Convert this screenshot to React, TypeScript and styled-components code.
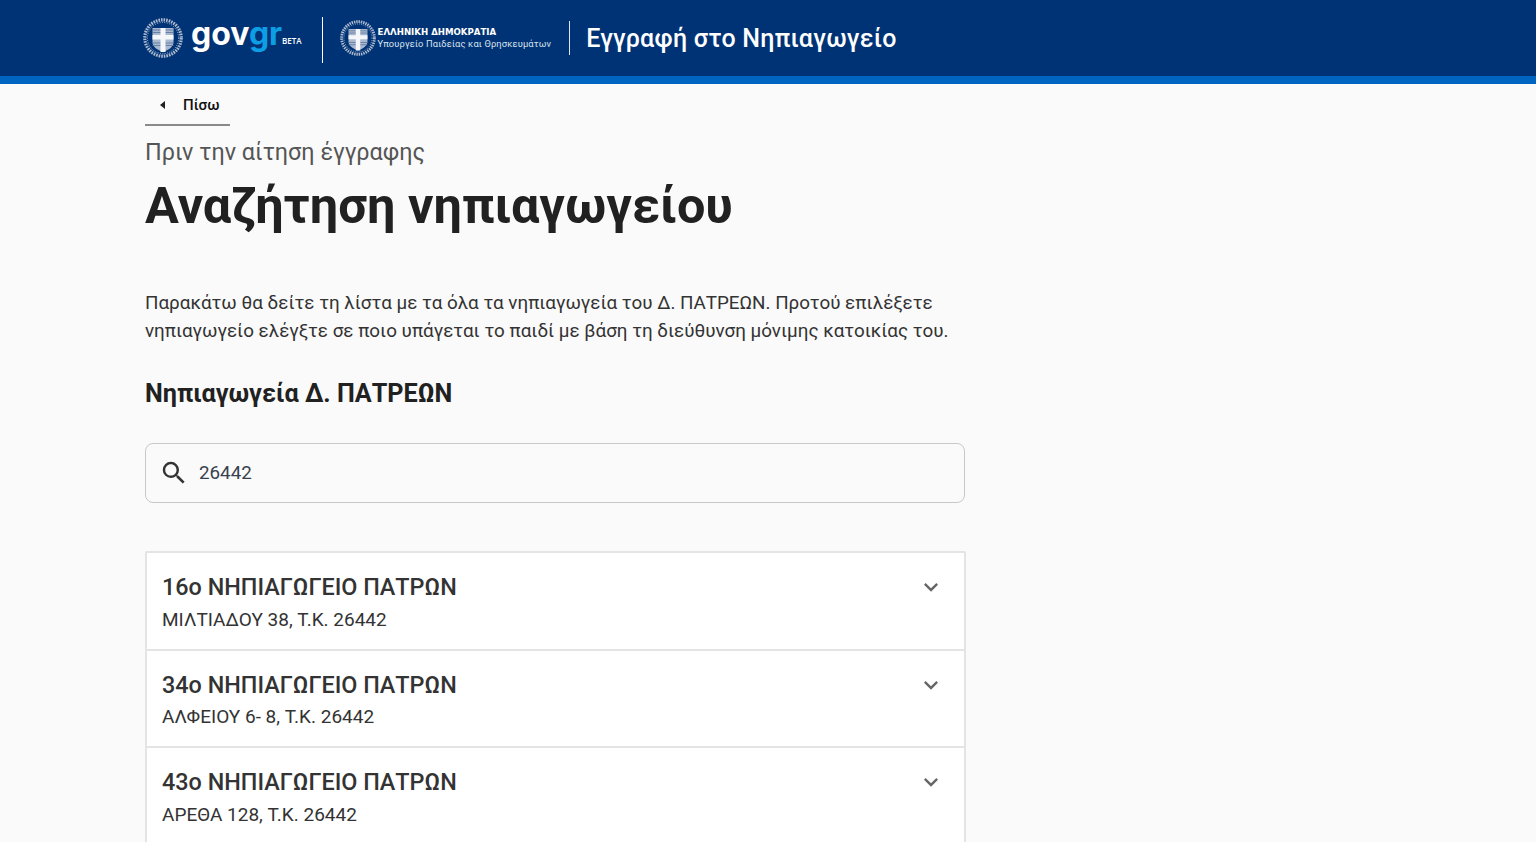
import { createGlobalStyle } from "styled-components";
import styled from "styled-components";

const GlobalStyle = createGlobalStyle`
  html, body {
    margin: 0;
    padding: 0;
    height: 842px;
    overflow: hidden;
    background: #fafafa;
    font-family: Roboto, "Noto Sans", sans-serif;
    color: #212121;
  }
`;

const schools = [
  { name: "16ο ΝΗΠΙΑΓΩΓΕΙΟ ΠΑΤΡΩΝ", address: "ΜΙΛΤΙΑΔΟΥ 38, Τ.Κ. 26442" },
  { name: "34ο ΝΗΠΙΑΓΩΓΕΙΟ ΠΑΤΡΩΝ", address: "ΑΛΦΕΙΟΥ 6- 8, Τ.Κ. 26442" },
  { name: "43ο ΝΗΠΙΑΓΩΓΕΙΟ ΠΑΤΡΩΝ", address: "ΑΡΕΘΑ 128, Τ.Κ. 26442" },
];

const Emblem = ({ size }: { size: number }) => (
  <svg width={size} height={size} viewBox="0 0 40 40" fill="none">
    <circle cx="20" cy="20" r="18.2" stroke="#aebbd0" strokeWidth="3.2" strokeDasharray="1.6 1" />
    <circle cx="20" cy="20" r="15.6" stroke="#d5dce8" strokeWidth="0.8" strokeDasharray="1 1.4" />
    <path d="M9.5 10h21v14c0 5-5 8-10.500 10-5.500-2-10.500-5-10.500-10z" fill="#aab8cf" />
    <path d="M9.500 12h21M9.500 14.500h21M9.500 25h21M9.500 27.500h21" stroke="#5f789f" strokeWidth="0.9" />
    <path d="M17.500 10h5V17h8v4.500h-8V34h-5V21.500h-8V17h8z" fill="#f4f6fa" />
  </svg>
);

export default function App() {
  return (
    <>
      <GlobalStyle />
      <Header>
        <HeaderInner>
          <GovLogo>
            <Emblem size={40} />
            <GovWord>
              gov<GovAccent>gr</GovAccent>
            </GovWord>
            <Beta>BETA</Beta>
          </GovLogo>
          <TallDivider />
          <MinistryLogo>
            <Emblem size={36} />
            <MinistryText>
              <MinistryTitle>ΕΛΛΗΝΙΚΗ ΔΗΜΟΚΡΑΤΙΑ</MinistryTitle>
              <MinistryName>Υπουργείο Παιδείας και Θρησκευμάτων</MinistryName>
            </MinistryText>
          </MinistryLogo>
          <ShortDivider />
          <ServiceTitle>Εγγραφή στο Νηπιαγωγείο</ServiceTitle>
        </HeaderInner>
      </Header>

      <Main>
        <BackLink>
          <BackArrow viewBox="0 0 5 8">
            <path d="M5 0v8L0 4z" fill="#212121" />
          </BackArrow>
          Πίσω
        </BackLink>
        <Caption>Πριν την αίτηση έγγραφης</Caption>
        <Title>Αναζήτηση νηπιαγωγείου</Title>
        <Intro>
          Παρακάτω θα δείτε τη λίστα με τα όλα τα νηπιαγωγεία του Δ. ΠΑΤΡΕΩΝ. Προτού επιλέξετε
          νηπιαγωγείο ελέγξτε σε ποιο υπάγεται το παιδί με βάση τη διεύθυνση μόνιμης κατοικίας του.
        </Intro>
        <SectionTitle>Νηπιαγωγεία Δ. ΠΑΤΡΕΩΝ</SectionTitle>
        <SearchBox>
          <SearchIcon viewBox="0 0 24 24">
            <path d="M15.5 14h-.79l-.28-.27A6.47 6.47 0 0 0 16 9.5 6.5 6.5 0 1 0 9.5 16c1.61 0 3.09-.59 4.23-1.57l.27.28v.79l5 4.99L20.49 19zm-6 0C7.01 14 5 11.99 5 9.5S7.01 5 9.5 5 14 7.01 14 9.5 11.99 14 9.5 14" />
          </SearchIcon>
          <SearchInput defaultValue="26442" />
        </SearchBox>
        <List>
          {schools.map((school) => (
            <Row key={school.name}>
              <RowText>
                <RowName>{school.name}</RowName>
                <RowAddress>{school.address}</RowAddress>
              </RowText>
              <Chevron viewBox="0 0 24 24">
                <path d="M7.41 8.59 12 13.17l4.59-4.58L18 10l-6 6-6-6z" />
              </Chevron>
            </Row>
          ))}
        </List>
      </Main>
    </>
  );
}

const Header = styled.header`
  height: 76px;
  background: #003375;
  border-bottom: 8px solid #0065c1;
`;

const HeaderInner = styled.div`
  display: flex;
  align-items: center;
  height: 100%;
  padding-left: 143px;
`;

const GovLogo = styled.div`
  display: flex;
  align-items: center;
`;

const GovWord = styled.span`
  width: 90px;
  margin-left: 8px;
  margin-top: -8px;
  font-family: Inter, sans-serif;
  font-size: 32px;
  font-weight: 700;
  line-height: 40px;
  color: #fff;
`;

const GovAccent = styled.span`
  color: #0d9fe6;
`;

const Beta = styled.span`
  margin: 5px 0 0 1px;
  font-family: "Open Sans", sans-serif;
  font-size: 8px;
  font-weight: 600;
  color: #fff;
`;

const TallDivider = styled.div`
  width: 1px;
  height: 46px;
  margin: 3px 17px 0 20px;
  background: #fff;
`;

const ShortDivider = styled.div`
  width: 1px;
  height: 34px;
  margin: 0 16px 0 18px;
  background: #dfe6f0;
`;

const MinistryLogo = styled.div`
  display: flex;
  align-items: center;
  gap: 2px;
`;

const MinistryText = styled.div`
  display: flex;
  flex-direction: column;
  color: #fff;
`;

const MinistryTitle = styled.span`
  font-family: "DejaVu Sans", sans-serif;
  font-size: 8.6px;
  font-weight: 700;
  line-height: 12px;
  white-space: nowrap;
`;

const MinistryName = styled.span`
  font-size: 9.3px;
  line-height: 12px;
  letter-spacing: 0.15px;
  color: #dbe3ef;
  white-space: nowrap;
`;

const ServiceTitle = styled.div`
  font-size: 25px;
  font-weight: 500;
  letter-spacing: 0.25px;
  color: #fff;
`;

const Main = styled.main`
  width: 820px;
  margin-left: 145px;
`;

const BackLink = styled.a`
  display: flex;
  align-items: center;
  box-sizing: border-box;
  width: 85px;
  height: 42px;
  padding: 2px 0 0 15px;
  font-size: 15px;
  font-weight: 500;
  color: #111;
  border-bottom: 2px solid #8a8a8a;
`;

const BackArrow = styled.svg`
  width: 5px;
  height: 8px;
  margin-right: 18px;
`;

const Caption = styled.div`
  margin-top: 11px;
  font-size: 23.4px;
  line-height: 30px;
  color: #555;
`;

const Title = styled.h1`
  margin: 9px 0 0;
  font-size: 50.4px;
  font-weight: 700;
  line-height: 60px;
  color: #212121;
`;

const Intro = styled.p`
  margin: 53px 0 0;
  font-size: 18.83px;
  line-height: 28px;
  color: #333;
`;

const SectionTitle = styled.h2`
  margin: 31px 0 0;
  font-size: 25.2px;
  font-weight: 700;
  line-height: 36px;
`;

const SearchBox = styled.div`
  display: flex;
  align-items: center;
  box-sizing: border-box;
  height: 60px;
  margin-top: 31px;
  padding-left: 13px;
  border: 1px solid #c8c8c8;
  border-radius: 8px;
`;

const SearchIcon = styled.svg`
  width: 30px;
  height: 30px;
  margin-right: 10px;
  fill: #333;
`;

const SearchInput = styled.input`
  flex: 1;
  border: 0;
  outline: 0;
  padding: 0;
  background: transparent;
  font-family: inherit;
  font-size: 18.8px;
  color: #37414f;
`;

const List = styled.div`
  width: 821px;
  box-sizing: border-box;
  margin-top: 48px;
  background: #fff;
  border: 2px solid #e4e4e4;
  border-bottom: 0;
  border-radius: 2px 2px 0 0;
`;

const Row = styled.div`
  display: flex;
  justify-content: space-between;
  box-sizing: border-box;
  height: 97.5px;
  padding: 19px 19px 0 15px;
  border-bottom: 2px solid #e4e4e4;
`;

const RowText = styled.div`
  display: flex;
  flex-direction: column;
`;

const RowName = styled.div`
  font-size: 23.4px;
  font-weight: 500;
  line-height: 30px;
  color: #333;
`;

const RowAddress = styled.div`
  margin-top: 3.5px;
  font-size: 19px;
  line-height: 28px;
  color: #333;
`;

const Chevron = styled.svg`
  width: 28px;
  height: 28px;
  margin-top: 1px;
  fill: #666;
`;
